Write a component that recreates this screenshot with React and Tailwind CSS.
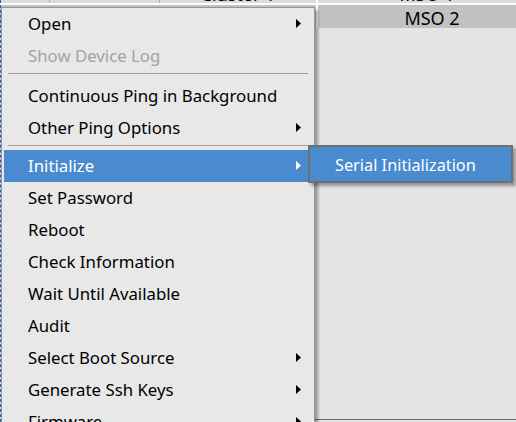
const items = [
  { label: "Open", sub: true },
  { label: "Show Device Log", disabled: true },
  { sep: "h-[8px] pt-[1px]" },
  { label: "Continuous Ping in Background" },
  { label: "Other Ping Options", sub: true },
  { sep: "h-[6px] pt-[1px]" },
  { label: "Initialize", sub: true, active: true },
  { label: "Set Password" },
  { label: "Reboot" },
  { label: "Check Information" },
  { label: "Wait Until Available" },
  { label: "Audit" },
  { label: "Select Boot Source", sub: true },
  { label: "Generate Ssh Keys", sub: true },
  { label: "Firmware", sub: true },
];

function Arrow({ white }) {
  return (
    <svg width="5" height="9" viewBox="0 0 5 9" className="absolute right-[11px] top-[11px]">
      <path d="M0 0 L5 4.5 L0 9 Z" fill={white ? "#ffffff" : "#000000"} />
    </svg>
  );
}

export default function App() {
  return (
    <div
      className="relative w-[516px] h-[422px] overflow-hidden bg-[#e5e5e7] text-black"
      style={{ fontFamily: '"Noto Sans", "Open Sans", sans-serif' }}
    >
      {/* grid behind the menu */}
      <div className="-mt-[17px] flex flex-col">
        <div className="flex h-[22px] border-b-2 border-white bg-[#dcdcdc]">
          <div className="w-[50px] border-r border-[#b0b0b0]" />
          <div className="w-[110px] border-r border-[#b0b0b0]" />
          <div className="w-[158px] border-r-2 border-white flex items-end justify-center text-[18px] leading-none">
            Cluster 1
          </div>
          <div className="flex-1 flex items-end justify-center text-[18px] leading-none pl-[20px]">MSO 1</div>
        </div>
        <div className="flex h-[23px] bg-[#c2c2c2]">
          <div className="w-[318px] border-r-2 border-white" />
          <div className="flex-1 flex items-end justify-center text-[18px] leading-none pb-[1px] pl-[30px]">MSO 2</div>
        </div>
      </div>
      <div className="absolute left-0 top-0 h-full w-[1px] border-l border-dashed border-[#2a5fb8]" />
      <div className="absolute left-[315px] right-0 top-[419px] h-[1px] bg-[#6a6a6a]" />

      {/* context menu */}
      <div className="absolute left-[1px] top-[7px] w-[314px] border border-[#979797] bg-[#e8e8e9] px-[2px] shadow-[3px_3px_3px_rgba(0,0,0,0.35)]">
        {items.map((it, i) =>
          it.sep ? (
            <div key={i} className={it.sep}>
              <div className="mx-[4px] h-[1px] bg-[#a0a0a0]" />
            </div>
          ) : (
            <div
              key={i}
              className={`relative flex h-[32px] items-center pl-[24px] text-[16.8px] ${
                it.active ? "bg-[#4a8bcf] text-white" : it.disabled ? "text-[#a3a3a3]" : "text-black"
              }`}
            >
              {it.label}
              {it.sub && <Arrow white={it.active} />}
            </div>
          )
        )}
      </div>

      {/* submenu */}
      <div className="absolute left-[308px] top-[145px] w-[205px] h-[38px] border-2 border-[#6f6f6f] bg-[#4a8bcf] shadow-[3px_3px_3px_rgba(0,0,0,0.35)] flex items-center pt-[3px]">
        <div className="pl-[25px] text-[16.3px] text-white">Serial Initialization</div>
      </div>
    </div>
  );
}
